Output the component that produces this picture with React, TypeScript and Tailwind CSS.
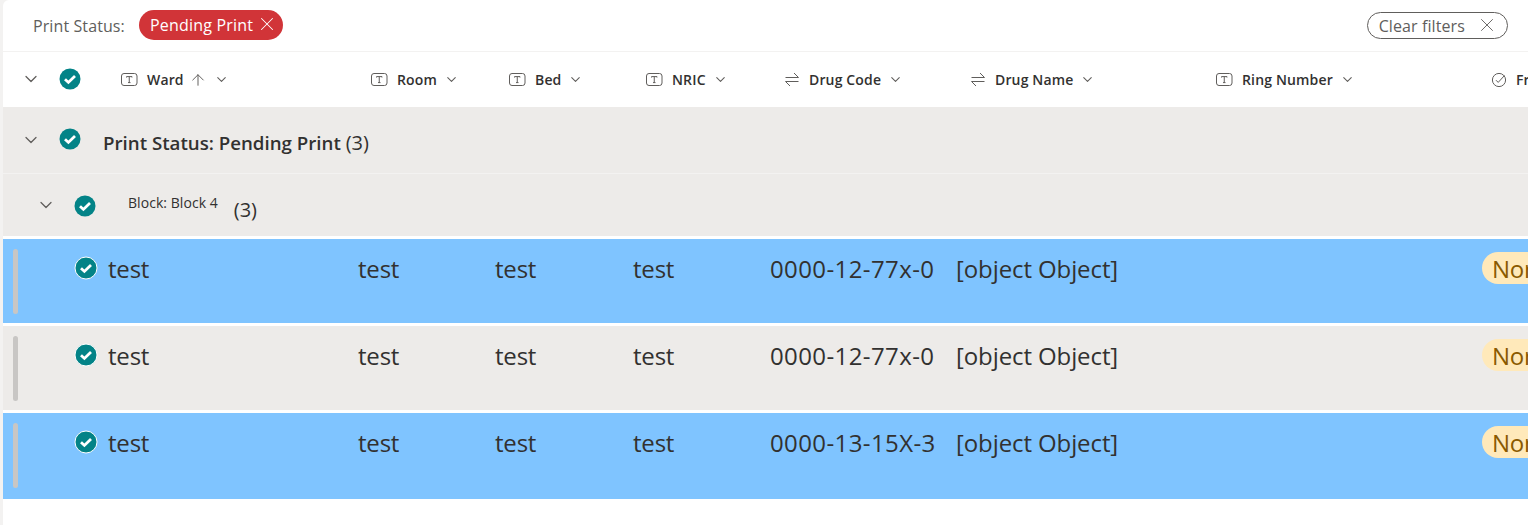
import { ArrowUp, ChevronDown, X } from 'lucide-react'

const font = { fontFamily: '"Open Sans", "Noto Sans", sans-serif' }

function CheckCircle({ ring }: { ring?: boolean }) {
  return (
    <svg width="24" height="24" viewBox="0 0 24 24" className="shrink-0">
      <circle cx="12" cy="12" r={ring ? 11 : 10.5} fill="#038387" stroke={ring ? '#fff' : 'none'} strokeWidth="1" />
      <path d="M7 12.2l3.4 3.2 6.6-6.4" fill="none" stroke="#fff" strokeWidth="2.8" />
    </svg>
  )
}

function TextIcon() {
  return (
    <svg width="17" height="13" viewBox="0 0 17 13" className="shrink-0">
      <rect x="0.5" y="0.5" width="15.5" height="12" rx="2.5" fill="none" stroke="#605e5c" />
      <path d="M5.5 4.5V3.6h5.5v.9M8.25 3.6v6M7 9.6h2.5" fill="none" stroke="#605e5c" />
    </svg>
  )
}

function LookupIcon() {
  return (
    <svg width="16" height="16" viewBox="0 0 16 16" className="shrink-0">
      <path d="M1.5 5.5h13M10 1l4.5 4.5M14.5 9.5H1.5M6 14L1.5 9.5" fill="none" stroke="#605e5c" />
    </svg>
  )
}

function ChoiceIcon() {
  return (
    <svg width="16" height="16" viewBox="0 0 16 16" className="shrink-0">
      <circle cx="8" cy="8" r="6.6" fill="none" stroke="#605e5c" />
      <path d="M5 8.2l2.2 2.2L13.5 3.5" fill="none" stroke="#605e5c" />
    </svg>
  )
}

interface Column {
  label: string
  width: string
  kind: 'text' | 'lookup' | 'choice'
  sorted?: boolean
}

const columns: Column[] = [
  { label: 'Ward', width: 'w-[250px]', kind: 'text', sorted: true },
  { label: 'Room', width: 'w-[138px]', kind: 'text' },
  { label: 'Bed', width: 'w-[137px]', kind: 'text' },
  { label: 'NRIC', width: 'w-[138px]', kind: 'text' },
  { label: 'Drug Code', width: 'w-[186px]', kind: 'lookup' },
  { label: 'Drug Name', width: 'w-[246px]', kind: 'lookup' },
  { label: 'Ring Number', width: 'w-[275px]', kind: 'text' },
  { label: 'Fr', width: 'w-[60px]', kind: 'choice' },
]

function HeaderCell({ col }: { col: Column }) {
  return (
    <div className={`${col.width} shrink-0 flex items-center`}>
      {col.kind === 'text' && <TextIcon />}
      {col.kind === 'lookup' && <LookupIcon />}
      {col.kind === 'choice' && <ChoiceIcon />}
      <span className="ml-[9px] text-[14px] font-semibold text-[#323130] whitespace-nowrap tracking-[0.15px]">{col.label}</span>
      {col.sorted && <ArrowUp size={18} strokeWidth={1.3} color="#605e5c" className="ml-[5px]" />}
      {col.kind !== 'choice' && <ChevronDown size={15} strokeWidth={1.7} color="#605e5c" className="ml-[7px]" />}
    </div>
  )
}

const rows = [
  { code: '0000-12-77x-0', selected: true, height: 'h-[84px]' },
  { code: '0000-12-77x-0', selected: false, height: 'h-[84px]' },
  { code: '0000-13-15X-3', selected: true, height: 'h-[86px]' },
]

function Row({ code, selected, height }: { code: string; selected: boolean; height: string }) {
  return (
    <div className={`${height} flex overflow-hidden ${selected ? 'bg-[#7fc4ff]' : 'bg-[#edebe9]'}`}>
      <div className="ml-[10px] mt-[10px] w-[5px] h-[65px] rounded-sm bg-[#c8c6c4] shrink-0" />
      <div className="ml-[56px] mt-[17px] shrink-0 h-[24px]">
        <CheckCircle ring />
      </div>
      <div className="ml-[10px] mt-[13px] flex items-start text-[24px] leading-[34px] text-[#323130] tracking-[-0.2px] whitespace-nowrap">
        <span className="w-[250px] shrink-0">test</span>
        <span className="w-[137px] shrink-0">test</span>
        <span className="w-[138px] shrink-0">test</span>
        <span className="w-[137px] shrink-0">test</span>
        <span className="w-[186px] shrink-0 tracking-[0.4px]">{code}</span>
        <span className="w-[526px] shrink-0 tracking-[-0.1px]">[object Object]</span>
        <span className="h-[32px] pl-[10px] pr-[10px] rounded-full bg-[#ffe9ba] text-[#8a5a00] leading-[33px]">Normal</span>
      </div>
    </div>
  )
}

export default function App() {
  return (
    <div className="w-[1528px] h-[525px] overflow-hidden bg-[#f3f2f1] pl-[3px]" style={font}>
      <div className="h-full bg-white rounded-tl-md overflow-hidden">
        <div className="h-[52px] flex items-center border-b border-[#f3f2f1] pl-[30px] pr-[20px]">
          <span className="text-[16px] text-[#605e5c] tracking-[0.1px]">Print Status:</span>
          <span className="ml-[14px] h-[30px] -mt-[2px] pl-[11px] pr-[5px] rounded-full bg-[#d13438] text-white flex items-center text-[16px] tracking-[0.2px]">
            Pending Print
            <X size={22} strokeWidth={1.1} className="ml-[3px] -mt-[1px]" />
          </span>
          <span className="ml-auto h-[27px] -mt-[1px] pl-[11px] pr-[9px] rounded-full border border-[#605e5c] text-[#605e5c] flex items-center text-[16px] tracking-[0.1px]">
            <span className="mt-[1px]">Clear filters</span>
            <X size={22} strokeWidth={1} className="ml-[11px] -mt-[1px]" />
          </span>
        </div>

        <div className="h-[55px] flex items-center whitespace-nowrap">
          <ChevronDown size={20} strokeWidth={1.5} color="#605e5c" className="ml-[18px] -mt-[1px] shrink-0" />
          <div className="ml-[17px] -mt-[1px] shrink-0"><CheckCircle /></div>
          <div className="ml-[39px] flex items-center">
            {columns.map((col) => (
              <HeaderCell key={col.label} col={col} />
            ))}
          </div>
        </div>

        <div className="h-[67px] flex items-center bg-[#edebe9] border-b border-[#f3f2f1]">
          <ChevronDown size={20} strokeWidth={1.5} color="#605e5c" className="ml-[18px] shrink-0" />
          <div className="ml-[17px] -mt-[2px] shrink-0"><CheckCircle /></div>
          <span className="ml-[21px] mt-[5px] text-[18.7px] font-semibold text-[#323130]">Print Status: Pending Print <span className="font-normal text-[20px]">(3)</span></span>
        </div>

        <div className="h-[62px] flex bg-[#edebe9]">
          <ChevronDown size={20} strokeWidth={1.5} color="#605e5c" className="ml-[33px] mt-[21px] shrink-0" />
          <div className="ml-[17px] mt-[20px] shrink-0"><CheckCircle /></div>
          <span className="ml-[31px] mt-[19px] text-[14px] leading-[20px] text-[#323130] tracking-[0.05px]">Block: Block 4</span>
          <span className="ml-[16px] mt-[23px] text-[20px] leading-[25px] text-[#323130]">(3)</span>
        </div>

        <div className="mt-[3px] flex flex-col gap-[3px]">
          {rows.map((row, i) => (
            <Row key={i} {...row} />
          ))}
        </div>
      </div>
    </div>
  )
}
